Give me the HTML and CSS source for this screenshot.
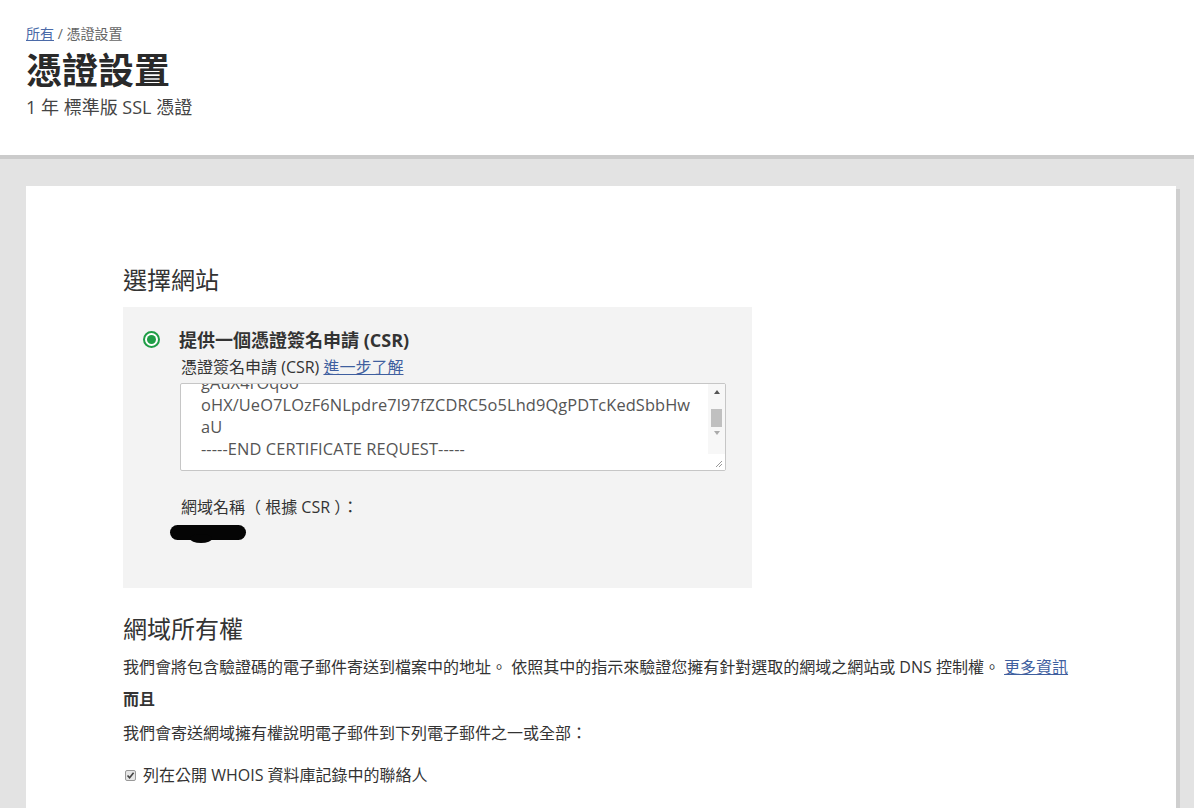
FILE: index.html
```html
<!DOCTYPE html>
<html lang="zh-Hant">
<head>
  <meta charset="UTF-8" />
  <meta name="viewport" content="width=device-width, initial-scale=1.0" />
  <title>憑證設置</title>
  <link rel="stylesheet" href="styles.css">
</head>
<body>
<header class="page-head">
  <div class="crumbs"><a href="#">所有</a> / 憑證設置</div>
  <h1>憑證設置</h1>
  <div class="subtitle">1 年 標準版 SSL 憑證</div>
</header>

<main class="page-body">
  <div class="card">
    <h2>選擇網站</h2>

    <div class="option-box">
      <div class="radio-row">
        <span class="radio"><span class="dot"></span></span>
        <span class="radio-label">提供一個憑證簽名申請 (CSR)</span>
      </div>
      <div class="option-body">
        <div class="field-label">憑證簽名申請 (CSR) <a href="#">進一步了解</a></div>
        <div class="csr-box">
          <div class="csr-text">
            <div class="csr-line">gAuX4rOq8o</div>
            <div class="csr-line">oHX/UeO7LOzF6NLpdre7l97fZCDRC5o5Lhd9QgPDTcKedSbbHw</div>
            <div class="csr-line">aU</div>
            <div class="csr-line">-----END CERTIFICATE REQUEST-----</div>
          </div>
          <div class="scrollbar">
            <span class="arrow up"></span>
            <span class="track"><span class="thumb"></span></span>
            <span class="arrow down"></span>
            <span class="grip">
              <svg width="9" height="9" viewBox="0 0 9 9"><path d="M8 2 L2 8 M8 5 L5 8" stroke="#999" stroke-width="1" fill="none"/></svg>
            </span>
          </div>
        </div>
        <div class="domain-label">網域名稱（ 根據 CSR ）：</div>
        <div class="redacted"><span class="blot"></span><span class="blot-tail"></span></div>
      </div>
    </div>

    <h2 class="second">網域所有權</h2>
    <p class="note">我們會將包含驗證碼的電子郵件寄送到檔案中的地址。 依照其中的指示來驗證您擁有針對選取的網域之網站或 DNS 控制權。 <a href="#">更多資訊</a></p>
    <p class="and">而且</p>
    <p class="note">我們會寄送網域擁有權說明電子郵件到下列電子郵件之一或全部：</p>
    <label class="check-row">
      <span class="check">
        <svg width="9" height="9" viewBox="0 0 9 9"><path d="M1.5 4.5 L3.6 6.8 L7.6 1.8" stroke="#444" stroke-width="1.6" fill="none"/></svg>
      </span>
      列在公開 WHOIS 資料庫記錄中的聯絡人
    </label>
  </div>
</main>
</body>
</html>
```

FILE: styles.css
```css
* { box-sizing: border-box; margin: 0; padding: 0; }

body {
  font-family: "Open Sans", "Noto Sans CJK TC", sans-serif;
  font-size: 16px;
  color: #333;
  background: #e3e3e3;
  min-height: 100vh;
}

a { color: #3f5f9f; }

.page-head {
  background: #ffffff;
  border-bottom: 4px solid #cbcbcb;
  height: 159px;
  padding: 24px 26px 0;
}
.crumbs {
  font-size: 14px;
  color: #666;
  line-height: 20px;
}
.crumbs a { color: #4b6aa8; }
.page-head h1 {
  font-size: 36px;
  font-weight: 700;
  color: #2a2a2a;
  line-height: 44px;
  margin-top: 5px;
}
.subtitle {
  font-size: 18px;
  color: #444;
  line-height: 24px;
  margin-top: 2px;
}

.page-body {
  padding: 27px 18px 0 26px;
}
.card {
  background: #ffffff;
  box-shadow: 4px 3px 0 #cfcfcf;
  min-height: 640px;
  padding: 80px 97px 0;
}

h2 {
  font-size: 24px;
  font-weight: 400;
  color: #333;
  line-height: 28px;
}

.option-box {
  width: 629px;
  height: 281px;
  background: #f3f3f3;
  margin-top: 13px;
  padding: 20px 20px 0;
}
.radio-row {
  display: flex;
  align-items: center;
  gap: 19px;
  height: 24px;
}
.radio {
  width: 17px;
  height: 17px;
  border-radius: 50%;
  border: 2px solid #1f9d46;
  background: #ffffff;
  display: flex;
  align-items: center;
  justify-content: center;
}
.radio .dot {
  width: 9px;
  height: 9px;
  border-radius: 50%;
  background: #1f9d46;
}
.radio-label {
  font-size: 18px;
  font-weight: 700;
  color: #333;
}
.option-body {
  padding-left: 37px;
}
.field-label {
  font-size: 16px;
  line-height: 20px;
  margin-top: 6px;
  padding-left: 1px;
}
.csr-box {
  margin-top: 6px;
  width: 546px;
  height: 88px;
  border: 1px solid #c6c6c6;
  border-radius: 2px;
  background: #ffffff;
  display: flex;
  overflow: hidden;
}
.csr-text {
  flex: 1;
  padding-left: 20px;
  margin-top: -12px;
  color: #555;
  font-size: 16.4px;
  line-height: 22px;
  letter-spacing: 0.1px;
}
.scrollbar {
  width: 17px;
  display: flex;
  flex-direction: column;
  align-items: center;
  background: #f7f7f7;
}
.arrow {
  width: 0;
  height: 0;
  border-left: 3.5px solid transparent;
  border-right: 3.5px solid transparent;
  margin: 6px 0;
}
.arrow.up { border-bottom: 4px solid #555; }
.arrow.down { border-top: 4px solid #aaa; margin-top: 2px; }
.track {
  height: 20px;
  width: 100%;
  display: flex;
  justify-content: center;
  padding-top: 9px;
  box-sizing: content-box;
}
.thumb {
  width: 11px;
  height: 18px;
  background: #c0c0c0;
}
.grip {
  margin-top: auto;
  width: 17px;
  height: 16px;
  display: flex;
  align-items: flex-end;
  justify-content: flex-end;
  padding: 0 2px 2px 0;
  background: #ffffff;
}

.domain-label {
  margin-top: 26px;
  line-height: 20px;
  padding-left: 1px;
}
.redacted {
  position: relative;
  margin: 8px 0 0 -10px;
  width: 78px;
  height: 22px;
}
.blot {
  display: block;
  width: 76px;
  height: 15px;
  border-radius: 8px;
  background: #050505;
}
.blot-tail {
  position: absolute;
  left: 20px;
  top: 9px;
  width: 22px;
  height: 9px;
  border-radius: 50%;
  background: #050505;
}

h2.second {
  margin-top: 27px;
}
.note {
  margin-top: 14px;
  line-height: 20px;
  font-size: 16px;
}
.and {
  margin-top: 12px;
  font-size: 16px;
  font-weight: 700;
  line-height: 20px;
  color: #333;
}
.and + .note { margin-top: 14px; }

.check-row {
  display: flex;
  align-items: center;
  gap: 7px;
  margin-top: 22px;
  margin-left: 2px;
  font-size: 16px;
  line-height: 20px;
}
.check {
  width: 11px;
  height: 11px;
  border: 1px solid #999;
  border-radius: 2px;
  background: #e6e6e6;
  display: flex;
  align-items: center;
  justify-content: center;
}
```
